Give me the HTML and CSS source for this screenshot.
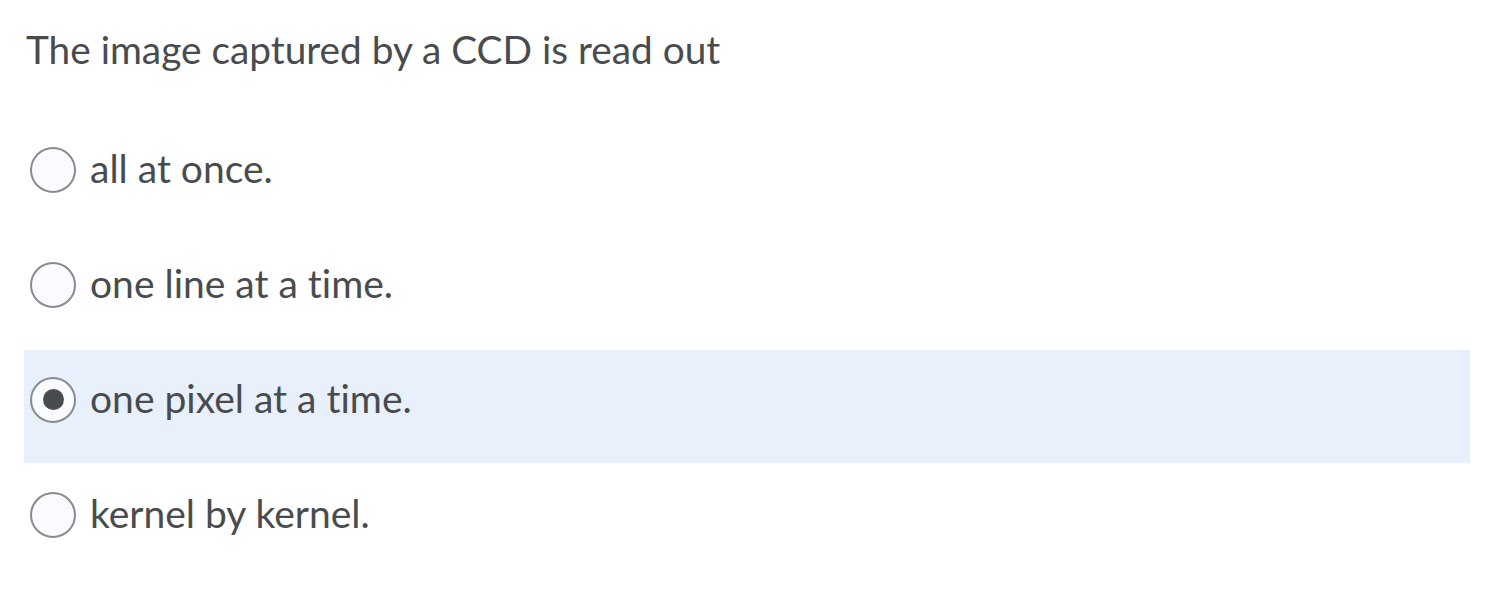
FILE: index.html
```html
<!DOCTYPE html>
<html lang="en">
<head>
    <meta charset="UTF-8">
    <meta name="viewport" content="width=device-width, initial-scale=1.0">
    <title>Quiz Question</title>
    <link rel="stylesheet" href="styles.css">
</head>
<body>
    <div class="question">
        <h1 class="question-text">The image captured by a CCD is read out</h1>

        <div class="choices">
            <label class="choice">
                <input type="radio" name="q1" value="a">
                <span class="radio"></span>
                <span class="choice-text">all at once.</span>
            </label>
            <label class="choice">
                <input type="radio" name="q1" value="b">
                <span class="radio"></span>
                <span class="choice-text">one line at a time.</span>
            </label>
            <label class="choice selected">
                <input type="radio" name="q1" value="c" checked>
                <span class="radio"></span>
                <span class="choice-text">one pixel at a time.</span>
            </label>
            <label class="choice">
                <input type="radio" name="q1" value="d">
                <span class="radio"></span>
                <span class="choice-text">kernel by kernel.</span>
            </label>
        </div>
    </div>
</body>
</html>
```

FILE: styles.css
```css
body {
    margin: 0;
    background-color: #fff;
    font-family: Lato, "Open Sans", sans-serif;
    font-variant-ligatures: none;
    color: #494c4e;
}

.question {
    width: 1446px;
    padding: 0 0 0 24px;
}

.question-text {
    margin: 0;
    padding: 25px 0 0 2px;
    height: 96px;
    box-sizing: border-box;
    font-size: 38.8px;
    font-weight: 400;
    line-height: 48px;
}

.choices {
    display: flex;
    flex-direction: column;
    gap: 2px;
    padding-top: 24px;
}

.choice {
    display: flex;
    align-items: center;
    gap: 14px;
    height: 113px;
    padding: 0 0 14px 6px;
    box-sizing: border-box;
    cursor: pointer;
    font-size: 39px;
    line-height: 46px;
}

.choice-text {
    padding-bottom: 4px;
}

.choice input {
    display: none;
}

.choice.selected {
    background-color: #e8f1fb;
}

.radio {
    position: relative;
    width: 46px;
    height: 46px;
    flex-shrink: 0;
    border: 2px solid #898c8f;
    border-radius: 50%;
    background-color: #f9fbff;
    box-sizing: border-box;
}

.choice input:checked + .radio::after {
    content: "";
    position: absolute;
    top: 50%;
    left: 50%;
    width: 21px;
    height: 21px;
    margin: -10.5px 0 0 -10.5px;
    border-radius: 50%;
    background-color: #494c4e;
}
```
